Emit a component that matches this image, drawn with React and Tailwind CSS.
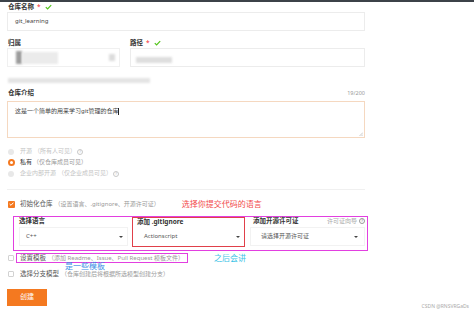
const Check = () => (
  <svg width="7" height="6" viewBox="0 0 7 6" className="shrink-0">
    <path d="M0.8 3.1 L2.6 4.9 L6.2 1.1" stroke="#52c41a" strokeWidth="1.2" fill="none" />
  </svg>
);

const Caret = () => (
  <span className="shrink-0 w-0 h-0 border-x-[2px] border-t-[2.5px] border-x-transparent border-t-[#444]" />
);

const Help = ({ light }) => (
  <span
    className={`shrink-0 inline-flex w-[6px] h-[6px] rounded-full border items-center justify-center text-[4px] leading-none ${
      light ? 'border-[#c8c8c8] text-[#bbb]' : 'border-[#999] text-[#777]'
    }`}
  >
    ?
  </span>
);

const Star = () => <span className="text-[#f5222d] font-normal">*</span>;

const BoxCheck = ({ checked }) =>
  checked ? (
    <span className="shrink-0 w-[7px] h-[7px] rounded-[1px] bg-[#f47920] flex items-center justify-center">
      <svg width="5" height="4" viewBox="0 0 5 4">
        <path d="M0.6 2 L2 3.3 L4.4 0.7" stroke="#fff" strokeWidth="1" fill="none" />
      </svg>
    </span>
  ) : (
    <span className="shrink-0 w-[6px] h-[6px] rounded-[1px] border border-[#d2d2d2] bg-white" />
  );

const Radio = ({ on }) =>
  on ? (
    <span className="shrink-0 block w-[7px] h-[7px] rounded-full border-[2px] border-[#f47920] bg-white" />
  ) : (
    <span className="shrink-0 block w-[6px] h-[6px] rounded-full bg-[#e8e8e8]" />
  );

export default function App() {
  return (
    <div className="w-[474px] h-[310px] bg-white overflow-hidden relative font-['Noto_Sans','Noto_Sans_CJK_SC',sans-serif] text-[#333]">
      <div className="h-[2px] bg-[#3c4248]" />

      <div className="pl-[7px] w-[365px]">
        {/* 仓库名称 */}
        <div className="mt-[1px] ml-[1px] h-[8px] flex items-center text-[6.5px] leading-[8px] font-bold">
          <span>仓库名称</span>
          <span className="ml-[3px]"><Star /></span>
          <span className="ml-[4px] flex"><Check /></span>
        </div>
        <div className="mt-[1px] h-[19px] border border-[#ececec] pl-[7px] flex items-center text-[6px] text-[#444]">
          git_learning
        </div>

        {/* 归属 / 路径 */}
        <div className="mt-[8px] flex gap-[10px]">
          <div className="w-[113px]">
            <div className="ml-[1px] h-[8px] flex items-center text-[6.5px] leading-[8px] font-bold">归属</div>
            <div className="mt-[1px] h-[19px] border border-[#f0f0f0] pl-[8px] pr-[4px] flex items-center">
              <span className="w-[6px] h-[13px] bg-[#9c9c9c] blur-[1px]" />
              <span className="w-[36px] h-[12px] bg-[#ebebeb] blur-[1px]" />
              <span className="ml-auto w-[6px] h-[7px] bg-[#dcdcdc] blur-[1px]" />
            </div>
          </div>
          <div className="w-[235px]">
            <div className="h-[8px] flex items-center text-[6.5px] leading-[8px] font-bold">
              <span>路径</span>
              <span className="ml-[3px]"><Star /></span>
              <span className="ml-[4px] flex"><Check /></span>
            </div>
            <div className="mt-[1px] h-[19px] border border-[#ececec] pl-[5px] flex items-end pb-[3px]">
              <span className="w-[36px] h-[6px] bg-[#dedede] blur-[1px]" />
            </div>
          </div>
        </div>

        <div className="mt-[11px] ml-[1px] h-[5px] w-[142px] bg-[#e4e4e4] blur-[1px]" />

        {/* 仓库介绍 */}
        <div className="mt-[6px] ml-[1px] h-[8px] flex items-center justify-between leading-[8px]">
          <span className="text-[6.5px] font-bold">仓库介绍</span>
          <span className="text-[5.5px] text-[#999]">19/200</span>
        </div>
        <div className="mt-[4px] h-[37px] border border-[#f5d8c0] pl-[7px] pt-[5px] relative">
          <div className="flex items-center text-[6px] leading-[8px] text-[#444]">
            这是一个简单的用来学习git管理的仓库
            <span className="w-[1px] h-[7px] bg-[#222]" />
          </div>
          <svg className="absolute right-[1px] bottom-[1px]" width="4" height="4" viewBox="0 0 4 4">
            <path d="M4 0.5 L0.5 4 M4 2.5 L2.5 4" stroke="#aaa" strokeWidth="0.6" />
          </svg>
        </div>

        {/* 可见性 */}
        <div className="mt-[8px] ml-[1px] flex flex-col text-[6px] leading-[11px]">
          <div className="h-[11px] flex items-center text-[#c4c4c4]">
            <Radio />
            <span className="ml-[6px]">开源</span>
            <span className="ml-[2px]">（所有人可见）</span>
            <span className="ml-[1px] flex"><Help light /></span>
          </div>
          <div className="h-[11px] flex items-center">
            <span className="-ml-[0.5px] flex"><Radio on /></span>
            <span className="ml-[5.5px] text-[#333]">私有</span>
            <span className="ml-[1px] text-[#999]">（仅仓库成员可见）</span>
          </div>
          <div className="h-[11px] flex items-center text-[#c4c4c4]">
            <Radio />
            <span className="ml-[6px]">企业内部开源</span>
            <span className="ml-[2px]">（仅企业成员可见）</span>
            <span className="ml-[1px] flex"><Help light /></span>
          </div>
        </div>

        <div className="mt-[10px] h-[1px] bg-[#f0f0f0]" />

        {/* 初始化仓库 */}
        <div className="mt-[9px] ml-[1px] h-[10px] flex items-center text-[6px]">
          <BoxCheck checked />
          <span className="ml-[5px] text-[6.5px] text-[#555]">初始化仓库</span>
          <span className="ml-[2px] text-[#999]">（设置语言、.gitignore、开源许可证）</span>
          <span className="ml-[22px] text-[8px] text-[#f24a4a]">选择你提交代码的语言</span>
        </div>

        {/* 语言 / gitignore / 许可证 */}
        <div className="mt-[7px] ml-[6px] w-[355px] h-[35px] border border-[#e23fe0] flex">
          <div className="ml-[5px] w-[109px]">
            <div className="h-[8px] flex items-center text-[6.5px] font-bold leading-[8px]">选择语言</div>
            <div className="mt-[2px] h-[19px] border border-[#f2f2f2] pl-[6px] pr-[4px] flex items-center justify-between text-[6px] text-[#555]">
              <span>C++</span>
              <Caret />
            </div>
          </div>
          <div className="ml-[4px] w-[113px] h-[30px] border border-[#e0404a]">
            <div className="pl-[4px] h-[8px] flex items-center text-[6.5px] font-bold leading-[8px]">添加 .gitignore</div>
            <div className="mt-[2px] h-[17px] pl-[11px] pr-[4px] flex items-center justify-between text-[6px] text-[#555]">
              <span>Actionscript</span>
              <Caret />
            </div>
          </div>
          <div className="ml-[5px] w-[115px]">
            <div className="pl-[3px] h-[8px] flex items-center justify-between leading-[8px]">
              <span className="text-[6.5px] font-bold">添加开源许可证</span>
              <span className="flex items-center gap-[2px] text-[6px] text-[#aaa]">
                许可证向导 <Help />
              </span>
            </div>
            <div className="mt-[2px] h-[19px] border border-[#f2f2f2] pl-[10px] pr-[6px] flex items-center justify-between text-[6px] text-[#555]">
              <span>请选择开源许可证</span>
              <Caret />
            </div>
          </div>
        </div>

        {/* 设置模板 */}
        <div className="mt-[2px] ml-[1px] h-[10px] flex items-center text-[6px] relative">
          <BoxCheck />
          <span className="ml-[2px] h-[10px] px-[3px] border border-[#e23fe0] flex items-center">
            <span className="text-[6.5px] text-[#555]">设置模板</span>
            <span className="ml-[2px] text-[#999]">（添加 Readme、Issue、Pull Request 模板文件）</span>
          </span>
          <span className="ml-[26px] text-[8px] text-[#3cc3e6]">之后会讲</span>
          <span className="absolute left-[57px] top-[8px] text-[8px] leading-[9px] text-[#3a8ee6]">是一些模板</span>
        </div>

        {/* 选择分支模型 */}
        <div className="mt-[6px] ml-[1px] h-[10px] flex items-center text-[6px]">
          <BoxCheck />
          <span className="ml-[6px] text-[6.5px] text-[#555]">选择分支模型</span>
          <span className="ml-[2px] text-[#999]">（仓库创建后将根据所选模型创建分支）</span>
        </div>

        <button className="mt-[10px] w-[40px] h-[17px] bg-[#f47920] text-white text-[7px] flex items-center justify-center">
          创建
        </button>
      </div>

      <div className="absolute right-[5px] bottom-[1px] text-[5px] leading-[6px] text-[#aaa]">CSDN @RNSVRGaDs</div>
    </div>
  );
}
